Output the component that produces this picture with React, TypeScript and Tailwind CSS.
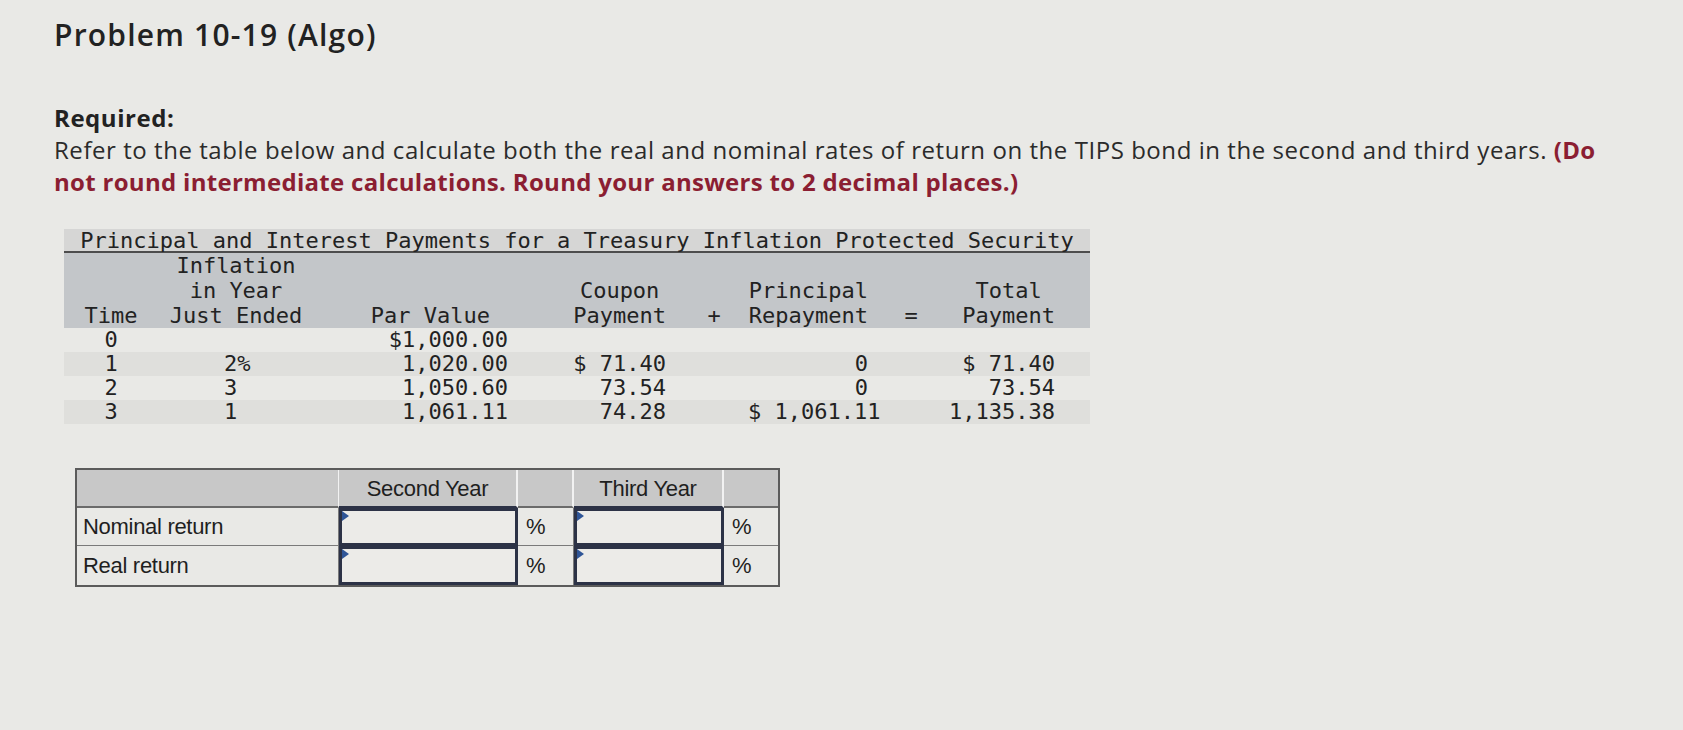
import React from 'react'

const mono = { fontFamily: '"DejaVu Sans Mono", monospace' }

const cols = 'grid grid-cols-[94px_156px_206px_160px_68px_132px_62px_148px]'

interface Row {
  time: string
  inflation: string
  par: string
  coupon: string
  principal: string
  total: string
  shaded?: boolean
}

const rows: Row[] = [
  { time: '0', inflation: '', par: '$1,000.00', coupon: '', principal: '', total: '' },
  { time: '1', inflation: '2%', par: '1,020.00', coupon: '$ 71.40', principal: '0', total: '$ 71.40', shaded: true },
  { time: '2', inflation: '3', par: '1,050.60', coupon: '73.54', principal: '0', total: '73.54' },
  { time: '3', inflation: '1', par: '1,061.11', coupon: '74.28', principal: '$ 1,061.11', total: '1,135.38', shaded: true },
]

function AnswerInput() {
  return (
    <div className="relative h-full w-full border-[3px] border-[#2c3246] bg-[#ecebe8]">
      <span className="absolute left-0 top-0 h-0 w-0 border-y-[5px] border-l-[7px] border-y-transparent border-l-[#2f5597]" />
      <input type="text" className="h-full w-full bg-transparent px-2 outline-none" aria-label="answer" />
    </div>
  )
}

export default function App() {
  return (
    <div
      className="h-[730px] w-full overflow-hidden bg-[#e9e9e6] pl-[54px] pt-[17px] text-[#2b2b2b]"
      style={{ fontFamily: '"Open Sans", sans-serif' }}
    >
      <h1 className="text-[30px] font-semibold leading-[36px] tracking-[1.2px] text-[#222]">Problem 10-19 (Algo)</h1>

      <div className="mt-[49px] text-[24px] leading-[32px] tracking-[0.55px]">
        <div className="font-bold text-[#222]">Required:</div>
        <p className="w-[1570px]">
          Refer to the table below and calculate both the real and nominal rates of return on the TIPS bond in
          the second and third years.{' '}
          <strong className="font-bold tracking-[0.3px] text-[#8b1e32]">
            (Do not round intermediate calculations. Round your answers to 2 decimal places.)
          </strong>
        </p>
      </div>

      {/* TIPS table */}
      <div className="ml-[10px] mt-[31px] w-[1026px] text-[22px] text-[#222]" style={mono}>
        <div className="h-[24px] border-b-2 border-[#4d4d4d] bg-[#d6d6d5] text-center leading-[24px]">
          Principal and Interest Payments for a Treasury Inflation Protected Security
        </div>
        <div className={`${cols} h-[75px] items-end bg-[#c3c6c9] pb-[1px] leading-[25px]`}>
          <div className="text-center">Time</div>
          <div className="text-center">
            Inflation
            <br />
            in Year
            <br />
            Just Ended
          </div>
          <div className="pr-[30px] text-right">Par Value</div>
          <div className="flex justify-end pr-[14px]">
            <div className="text-center">
              Coupon
              <br />
              Payment
            </div>
          </div>
          <div className="text-center">+</div>
          <div className="flex justify-end pr-[12px]">
            <div className="text-center">
              Principal
              <br />
              Repayment
            </div>
          </div>
          <div className="text-center">=</div>
          <div className="flex justify-end pr-[35px]">
            <div className="text-center">
              Total
              <br />
              Payment
            </div>
          </div>
        </div>
        {rows.map((r) => (
          <div key={r.time} className={`${cols} h-[24px] leading-[24px] ${r.shaded ? 'bg-[#dfdfdc]' : ''}`}>
            <div className="text-center">{r.time}</div>
            <div className="pl-[66px]">{r.inflation}</div>
            <div className="whitespace-pre pr-[12px] text-right">{r.par}</div>
            <div className="whitespace-pre pr-[14px] text-right">{r.coupon}</div>
            <div />
            <div className="whitespace-pre pr-[12px] text-right">{r.principal}</div>
            <div />
            <div className="whitespace-pre pr-[35px] text-right">{r.total}</div>
          </div>
        ))}
      </div>

      {/* Answer table */}
      <div
        className="ml-[21px] mt-[44px] grid w-[705px] grid-cols-[262px_179px_56px_150px_54px] grid-rows-[38px_38px_39px] border-2 border-[#5b5b5b] text-[22px] tracking-[-0.3px] text-[#1f1f1f]"
        style={{ fontFamily: '"Liberation Sans", Arial, sans-serif' }}
      >
        <div className="border-b-2 border-r border-b-[#6b6b6b] border-r-[#f2f2f2] bg-[#c8c8c8]" />
        <div className="flex items-center justify-center border-b-2 border-r-2 border-b-[#2c3246] border-r-[#f2f2f2] bg-[#c8c8c8]">
          Second Year
        </div>
        <div className="border-b-2 border-r-2 border-b-[#6b6b6b] border-r-[#f2f2f2] bg-[#c8c8c8]" />
        <div className="flex items-center justify-center border-b-2 border-r-2 border-b-[#2c3246] border-r-[#f2f2f2] bg-[#c8c8c8]">
          Third Year
        </div>
        <div className="border-b-2 border-b-[#6b6b6b] bg-[#c8c8c8]" />

        {['Nominal return', 'Real return'].map((label, i) => (
          <React.Fragment key={label}>
            <div className={`flex items-center border-r border-[#7a7a7a] pl-[6px] ${i === 0 ? 'border-b' : ''}`}>
              {label}
            </div>
            <AnswerInput />
            <div className={`flex items-center border-r border-[#7a7a7a] pl-[8px] ${i === 0 ? 'border-b' : ''}`}>%</div>
            <AnswerInput />
            <div className={`flex items-center border-[#7a7a7a] pl-[8px] ${i === 0 ? 'border-b' : ''}`}>%</div>
          </React.Fragment>
        ))}
      </div>
    </div>
  )
}
